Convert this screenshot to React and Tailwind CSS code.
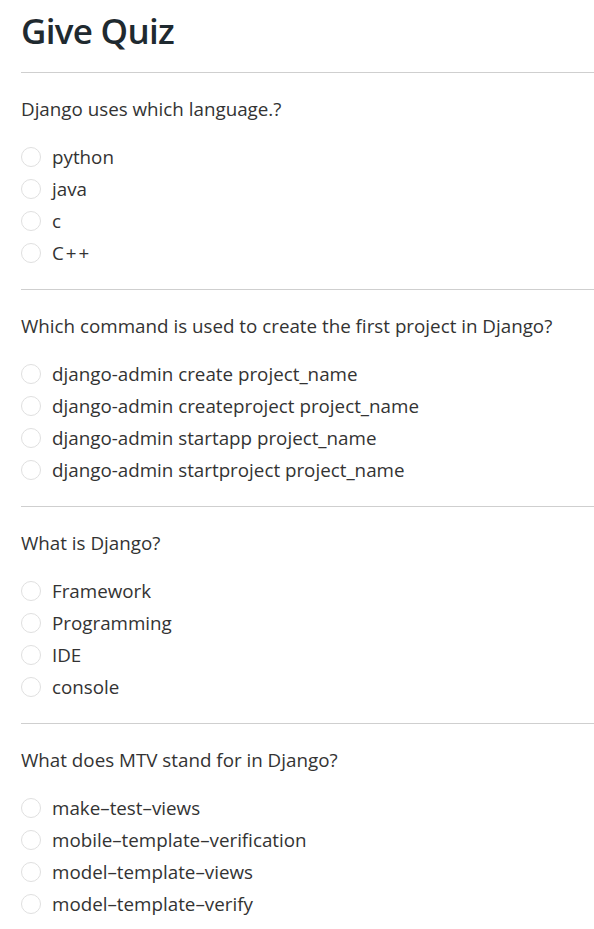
import React, { useState } from "react";

const questions = [
  {
    id: 1,
    text: "Django uses which language.?",
    options: ["python", "java", "c", "C++"],
  },
  {
    id: 2,
    text: "Which command is used to create the first project in Django?",
    options: [
      "django-admin create project_name",
      "django-admin createproject project_name",
      "django-admin startapp project_name",
      "django-admin startproject project_name",
    ],
  },
  {
    id: 3,
    text: "What is Django?",
    options: ["Framework", "Programming", "IDE", "console"],
  },
  {
    id: 4,
    text: "What does MTV stand for in Django?",
    options: [
      "make\u2013test\u2013views",
      "mobile\u2013template\u2013verification",
      "model\u2013template\u2013views",
      "model\u2013template\u2013verify",
    ],
  },
];

const Radio = ({ checked }) => (
  <span
    className={`w-5 h-5 rounded-full border-[1.5px] bg-white shrink-0 flex items-center justify-center ${
      checked ? "border-[#0d6efd]" : "border-[#e0e0e0]"
    }`}
  >
    {checked && <span className="w-2.5 h-2.5 rounded-full bg-[#0d6efd]" />}
  </span>
);

const Question = ({ q, value, onChange }) => (
  <div>
    <hr className="border-0 border-t border-[#cfcfcf]" />
    <p className="mt-5 leading-8 text-[18.8px] text-[#333]">{q.text}</p>
    <div className="mt-4 mb-5">
      {q.options.map((opt) => (
        <label key={opt} className="flex items-center h-8 gap-[11px] cursor-pointer" onClick={() => onChange(opt)}>
          <Radio checked={value === opt} />
          <span className={`text-[18.8px] text-[#333] ${opt === "C++" ? "tracking-[2px]" : ""}`}>{opt}</span>
        </label>
      ))}
    </div>
  </div>
);

export default function App() {
  const [answers, setAnswers] = useState({});

  return (
    <div className="min-h-screen bg-white pl-[21px] pt-[8px] font-['Open_Sans',sans-serif]">
      <h1 className="text-[35px] leading-[46px] font-semibold tracking-[-0.7px] text-[#1f2a30] mb-[18px]">Give Quiz</h1>
      {questions.map((q) => (
        <Question
          key={q.id}
          q={q}
          value={answers[q.id]}
          onChange={(opt) => setAnswers({ ...answers, [q.id]: opt })}
        />
      ))}
    </div>
  );
}
